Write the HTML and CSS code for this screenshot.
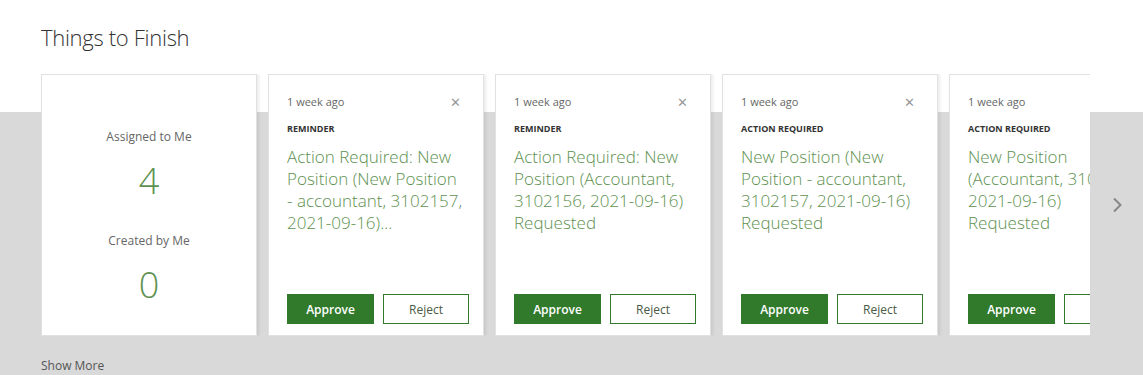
FILE: index.html
```html
<!DOCTYPE html>
<html lang="en">
<head>
    <meta charset="UTF-8">
    <meta name="viewport" content="width=device-width, initial-scale=1.0">
    <title>Things to Finish</title>
    <link rel="stylesheet" href="styles.css">
</head>
<body>
    <div class="section">
        <h1>Things to Finish</h1>

        <div class="strip">
            <div class="cards">
                <div class="card summary">
                    <div class="summary-label">Assigned to Me</div>
                    <div class="summary-count">4</div>
                    <div class="summary-label second">Created by Me</div>
                    <div class="summary-count">0</div>
                </div>

                <div class="card task">
                    <div class="task-meta">
                        <span>1 week ago</span>
                        <span class="close">&#x2715;</span>
                    </div>
                    <div class="task-type">Reminder</div>
                    <div class="task-title">Action Required: New<br>Position (New Position<br>- accountant, 3102157,<br>2021-09-16)...</div>
                    <div class="task-actions">
                        <button class="btn approve">Approve</button>
                        <button class="btn reject">Reject</button>
                    </div>
                </div>

                <div class="card task">
                    <div class="task-meta">
                        <span>1 week ago</span>
                        <span class="close">&#x2715;</span>
                    </div>
                    <div class="task-type">Reminder</div>
                    <div class="task-title">Action Required: New<br>Position (Accountant,<br>3102156, 2021-09-16)<br>Requested</div>
                    <div class="task-actions">
                        <button class="btn approve">Approve</button>
                        <button class="btn reject">Reject</button>
                    </div>
                </div>

                <div class="card task">
                    <div class="task-meta">
                        <span>1 week ago</span>
                        <span class="close">&#x2715;</span>
                    </div>
                    <div class="task-type">Action Required</div>
                    <div class="task-title">New Position (New<br>Position - accountant,<br>3102157, 2021-09-16)<br>Requested</div>
                    <div class="task-actions">
                        <button class="btn approve">Approve</button>
                        <button class="btn reject">Reject</button>
                    </div>
                </div>

                <div class="card task">
                    <div class="task-meta">
                        <span>1 week ago</span>
                        <span class="close">&#x2715;</span>
                    </div>
                    <div class="task-type">Action Required</div>
                    <div class="task-title">New Position<br>(Accountant, 3102156,<br>2021-09-16)<br>Requested</div>
                    <div class="task-actions">
                        <button class="btn approve">Approve</button>
                        <button class="btn reject">Reject</button>
                    </div>
                </div>
            </div>

            <div class="next">
                <svg width="10" height="16" viewBox="0 0 10 16">
                    <polyline points="2,1.5 8.5,8 2,14.5" fill="none" stroke="#888" stroke-width="2"/>
                </svg>
            </div>
        </div>

        <a class="show-more" href="#">Show More</a>
    </div>
</body>
</html>
```

FILE: styles.css
```css
body {
    margin: 0;
    padding: 0;
    font-family: 'Open Sans', 'Noto Sans', sans-serif;
    background-color: white;
}
.section {
    height: 375px;
    padding-left: 41px;
    background: linear-gradient(white 112px, #d9d9d9 112px);
    box-sizing: border-box;
    overflow: hidden;
}
h1 {
    margin: 0;
    padding-top: 21px;
    font-size: 22px;
    font-weight: 300;
    line-height: 32px;
    color: #333;
    letter-spacing: -0.3px;
}
.strip {
    display: flex;
    margin-top: 21px;
}
.cards {
    display: flex;
    gap: 11px;
    width: 1049px;
    flex: 0 0 1049px;
    overflow: hidden;
}
.card {
    flex: 0 0 216px;
    height: 262px;
    background-color: white;
    border: 1px solid #e1e1e1;
    box-shadow: 2px 0 3px rgba(0, 0, 0, 0.08);
    box-sizing: border-box;
}
.summary {
    text-align: center;
    padding-top: 54px;
}
.summary-label {
    font-size: 12px;
    line-height: 16px;
    color: #666;
}
.summary-label.second {
    margin-top: 32px;
}
.summary-count {
    margin-top: 16px;
    font-size: 36px;
    font-weight: 300;
    line-height: 40px;
    color: #5d9150;
}
.task {
    display: flex;
    flex-direction: column;
    padding: 20px 14px 11px 18px;
}
.task-meta {
    display: flex;
    justify-content: space-between;
    font-size: 11px;
    line-height: 14px;
    color: #666;
}
.close {
    color: #999;
    font-size: 13px;
    padding-right: 8px;
}
.task-type {
    margin-top: 13px;
    font-size: 9px;
    font-weight: 700;
    line-height: 14px;
    text-transform: uppercase;
    color: #333;
}
.task-title {
    margin-top: 10px;
    font-size: 17px;
    font-weight: 300;
    line-height: 22px;
    color: #5d9150;
    white-space: nowrap;
}
.task-actions {
    display: flex;
    gap: 9px;
    margin-top: auto;
}
.btn {
    width: 87px;
    height: 30px;
    font-family: inherit;
    font-size: 12px;
    font-weight: 600;
    border-radius: 0;
    cursor: pointer;
}
.approve {
    background-color: #317a2c;
    border: none;
    color: white;
}
.reject {
    width: 86px;
    background-color: white;
    border: 1px solid #317a2c;
    color: #4a5a44;
    font-weight: 400;
}
.next {
    flex: 1;
    display: flex;
    align-items: center;
    justify-content: center;
}
.show-more {
    display: block;
    margin-top: 22px;
    font-size: 12px;
    line-height: 16px;
    color: #555;
    text-decoration: none;
}
```
